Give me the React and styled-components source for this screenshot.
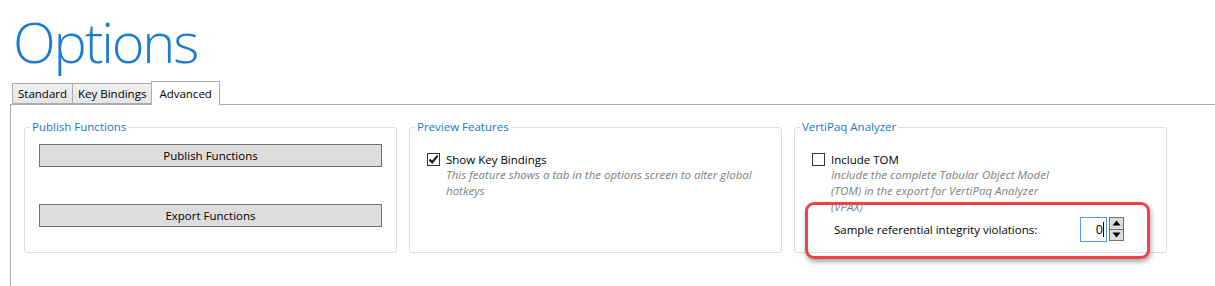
import React from "react";
import styled, { createGlobalStyle } from "styled-components";

const Global = createGlobalStyle`
  html, body { margin: 0; padding: 0; background: #ffffff; }
  body {
    font-family: "Segoe UI", "Open Sans", "Noto Sans", sans-serif;
    font-size: 11.5px;
    color: #000;
    width: 1215px;
    height: 286px;
    overflow: hidden;
  }
`;

const Page = styled.div`
  display: flex;
  flex-direction: column;
  height: 286px;
`;

const Header = styled.div`
  height: 82px;
  padding-left: 13px;
  box-sizing: border-box;
`;

const Title = styled.h1`
  margin: 0;
  font-family: "Segoe UI Light", "Open Sans", "Noto Sans", sans-serif;
  font-weight: 300;
  font-size: 56px;
  line-height: 82px;
  color: #1b7bd1;
  letter-spacing: -2.2px;
`;

const TabStrip = styled.div`
  display: flex;
  align-items: flex-end;
  margin-left: 12px;
  height: 22px;
  position: relative;
  z-index: 1;
`;

const Tab = styled.div`
  box-sizing: border-box;
  height: ${(p) => (p.$active ? "24px" : "21px")};
  margin-bottom: ${(p) => (p.$active ? "-1px" : "0")};
  padding: 0 ${(p) => (p.$active ? "7px" : "5px")};
  display: flex;
  align-items: center;
  border: 1px solid #acacac;
  border-bottom: ${(p) => (p.$active ? "none" : "1px solid #acacac")};
  margin-left: ${(p) => (p.$first ? "0" : "-1px")};
  background: ${(p) =>
    p.$active ? "#ffffff" : "linear-gradient(#f0f0f0, #e5e5e5)"};
  color: #000;
  white-space: nowrap;
`;

const Panel = styled.div`
  flex: 1;
  margin-left: 10px;
  border-top: 1px solid #acacac;
  border-left: 1px solid #acacac;
  padding: 14px 0 0 13px;
`;

const GroupRow = styled.div`
  display: flex;
  gap: 12px;
`;

const Group = styled.fieldset`
  position: relative;
  box-sizing: border-box;
  width: 373px;
  height: 134px;
  margin: 0;
  padding: 0;
  border: 1px solid #d5dfe6;
  border-radius: 3px;
  min-width: 0;
`;

const Legend = styled.legend`
  margin-left: 5px;
  padding: 0 2px;
  color: #1a76cc;
  line-height: 16px;
`;

const ButtonStack = styled.div`
  display: flex;
  flex-direction: column;
  gap: 37px;
  padding: 9px 14px 0 14px;
`;

const Button = styled.div`
  box-sizing: border-box;
  height: 23px;
  border: 1px solid #707070;
  background: #dddddd;
  display: flex;
  align-items: center;
  justify-content: center;
`;

const OptionBody = styled.div`
  padding: 16px 0 0 17px;
`;

const CheckRow = styled.div`
  display: flex;
  align-items: center;
  gap: 6px;
  height: 16px;
`;

const Box = styled.div`
  box-sizing: border-box;
  width: 13px;
  height: 13px;
  border: 1px solid #333333;
  background: #fff;
  display: flex;
  align-items: center;
  justify-content: center;
`;

const Description = styled.div`
  margin-left: 19px;
  color: #808080;
  font-style: italic;
  line-height: 16px;
`;

const Line = styled.div`
  white-space: nowrap;
`;

const SpinRow = styled.div`
  display: flex;
  align-items: center;
  margin-top: 2px;
  padding-left: 22px;
  width: 290px;
`;

const SpinLabel = styled.div`
  flex: 1;
`;

const NumInput = styled.div`
  box-sizing: border-box;
  width: 27px;
  height: 25px;
  border: 1px solid #569de5;
  display: flex;
  align-items: center;
  justify-content: flex-end;
  padding-right: 2px;
  font-size: 12.5px;
`;

const Caret = styled.span`
  display: inline-block;
  width: 1px;
  height: 15px;
  background: #000;
`;

const Spinner = styled.div`
  display: flex;
  flex-direction: column;
  margin-left: 2px;
  height: 25px;
`;

const SpinButton = styled.div`
  box-sizing: border-box;
  width: 15px;
  height: 12.5px;
  border: 1px solid #707070;
  margin-top: ${(p) => (p.$down ? "-1px" : "0")};
  background: #dddddd;
  display: flex;
  align-items: center;
  justify-content: center;
`;

const Highlight = styled.div`
  position: absolute;
  left: 10px;
  top: 67px;
  width: 345px;
  height: 57px;
  box-sizing: border-box;
  border: 3px solid #ec4346;
  border-radius: 9px;
  box-shadow: 1px 3px 5px rgba(0, 0, 0, 0.35);
  pointer-events: none;
`;

const Check = () => (
  <svg width="11" height="11" viewBox="0 0 11 11">
    <path
      d="M1.5 5.5 L4.2 8.4 L9.6 1.6"
      fill="none"
      stroke="#111"
      strokeWidth="2"
    />
  </svg>
);

const Tri = ({ down }) => (
  <svg width="9" height="6" viewBox="0 0 9 6">
    <path d={down ? "M0.5 0.5 H8.5 L4.5 5.5 Z" : "M0.5 5.5 H8.5 L4.5 0.5 Z"} fill="#000" />
  </svg>
);

export default function App() {
  return (
    <>
      <Global />
      <Page>
        <Header>
          <Title>Options</Title>
        </Header>
        <TabStrip>
          <Tab $first>Standard</Tab>
          <Tab>Key Bindings</Tab>
          <Tab $active>Advanced</Tab>
        </TabStrip>
        <Panel>
          <GroupRow>
            <Group>
              <Legend>Publish Functions</Legend>
              <ButtonStack>
                <Button>Publish Functions</Button>
                <Button>Export Functions</Button>
              </ButtonStack>
            </Group>
            <Group>
              <Legend>Preview Features</Legend>
              <OptionBody>
                <CheckRow>
                  <Box>
                    <Check />
                  </Box>
                  <span>Show Key Bindings</span>
                </CheckRow>
                <Description>
                  <Line>This feature shows a tab in the options screen to alter global</Line>
                  <Line>hotkeys</Line>
                </Description>
              </OptionBody>
            </Group>
            <Group>
              <Legend>VertiPaq Analyzer</Legend>
              <OptionBody>
                <CheckRow>
                  <Box />
                  <span>Include TOM</span>
                </CheckRow>
                <Description>
                  <Line>Include the complete Tabular Object Model</Line>
                  <Line>(TOM) in the export for VertiPaq Analyzer</Line>
                  <Line>(VPAX)</Line>
                </Description>
                <SpinRow>
                  <SpinLabel>Sample referential integrity violations:</SpinLabel>
                  <NumInput>
                    0<Caret />
                  </NumInput>
                  <Spinner>
                    <SpinButton>
                      <Tri />
                    </SpinButton>
                    <SpinButton $down>
                      <Tri down />
                    </SpinButton>
                  </Spinner>
                </SpinRow>
              </OptionBody>
              <Highlight />
            </Group>
          </GroupRow>
        </Panel>
      </Page>
    </>
  );
}
